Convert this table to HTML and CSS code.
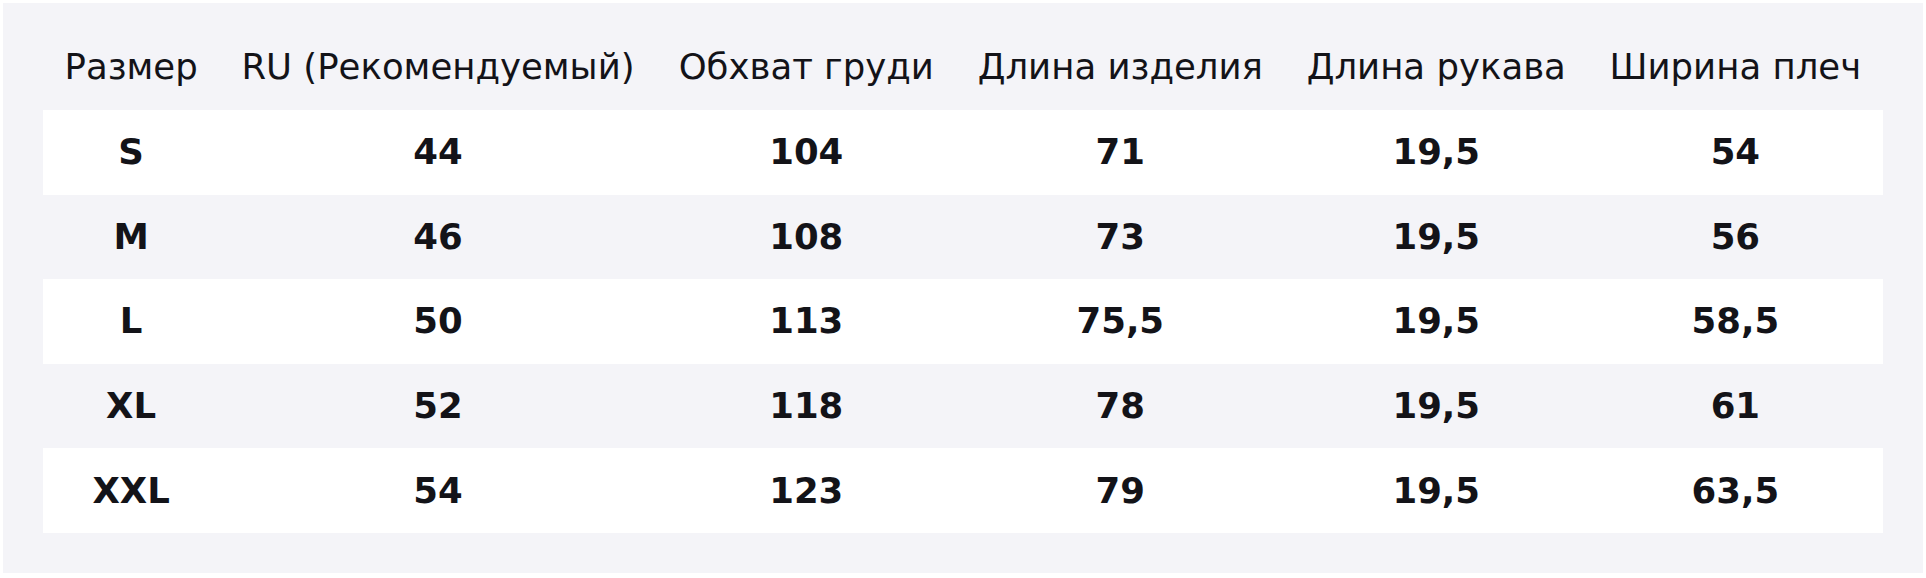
FILE: index.html
```html
<!DOCTYPE html>
<html lang="ru">
<head>
<meta charset="utf-8">
<title>Таблица размеров</title>
<link rel="stylesheet" href="styles.css">
</head>
<body>
<div class="sheet">
  <table class="sizes">
    <thead>
      <tr>
        <th>Размер</th>
        <th>RU (Рекомендуемый)</th>
        <th>Обхват груди</th>
        <th>Длина изделия</th>
        <th>Длина рукава</th>
        <th>Ширина плеч</th>
      </tr>
    </thead>
    <tbody>
      <tr><td>S</td><td>44</td><td>104</td><td>71</td><td>19,5</td><td>54</td></tr>
      <tr><td>M</td><td>46</td><td>108</td><td>73</td><td>19,5</td><td>56</td></tr>
      <tr><td>L</td><td>50</td><td>113</td><td>75,5</td><td>19,5</td><td>58,5</td></tr>
      <tr><td>XL</td><td>52</td><td>118</td><td>78</td><td>19,5</td><td>61</td></tr>
      <tr><td>XXL</td><td>54</td><td>123</td><td>79</td><td>19,5</td><td>63,5</td></tr>
    </tbody>
  </table>
</div>
</body>
</html>
```
FILE: styles.css
```css
html, body {
  margin: 0;
  background: #ffffff;
}
body {
  padding: 3px;
  font-family: "DejaVu Sans", Verdana, sans-serif;
  color: #131318;
}
.sheet {
  background: #f4f4f8;
  padding: 40px;
}
.sizes {
  width: 100%;
  border-collapse: collapse;
  border-spacing: 0;
}
.sizes th,
.sizes td {
  white-space: nowrap;
  text-align: center;
  font-size: 35.5px;
  line-height: 42px;
  padding: 0 21px;
}
.sizes th {
  font-weight: normal;
  padding-top: 3px;
  padding-bottom: 22px;
}
.sizes td {
  font-weight: bold;
  padding-top: 21.3px;
  padding-bottom: 21.3px;
}
.sizes tbody tr:nth-child(odd) {
  background: #ffffff;
}
.sizes tbody tr:nth-child(even) {
  background: #f4f4f8;
}
```
